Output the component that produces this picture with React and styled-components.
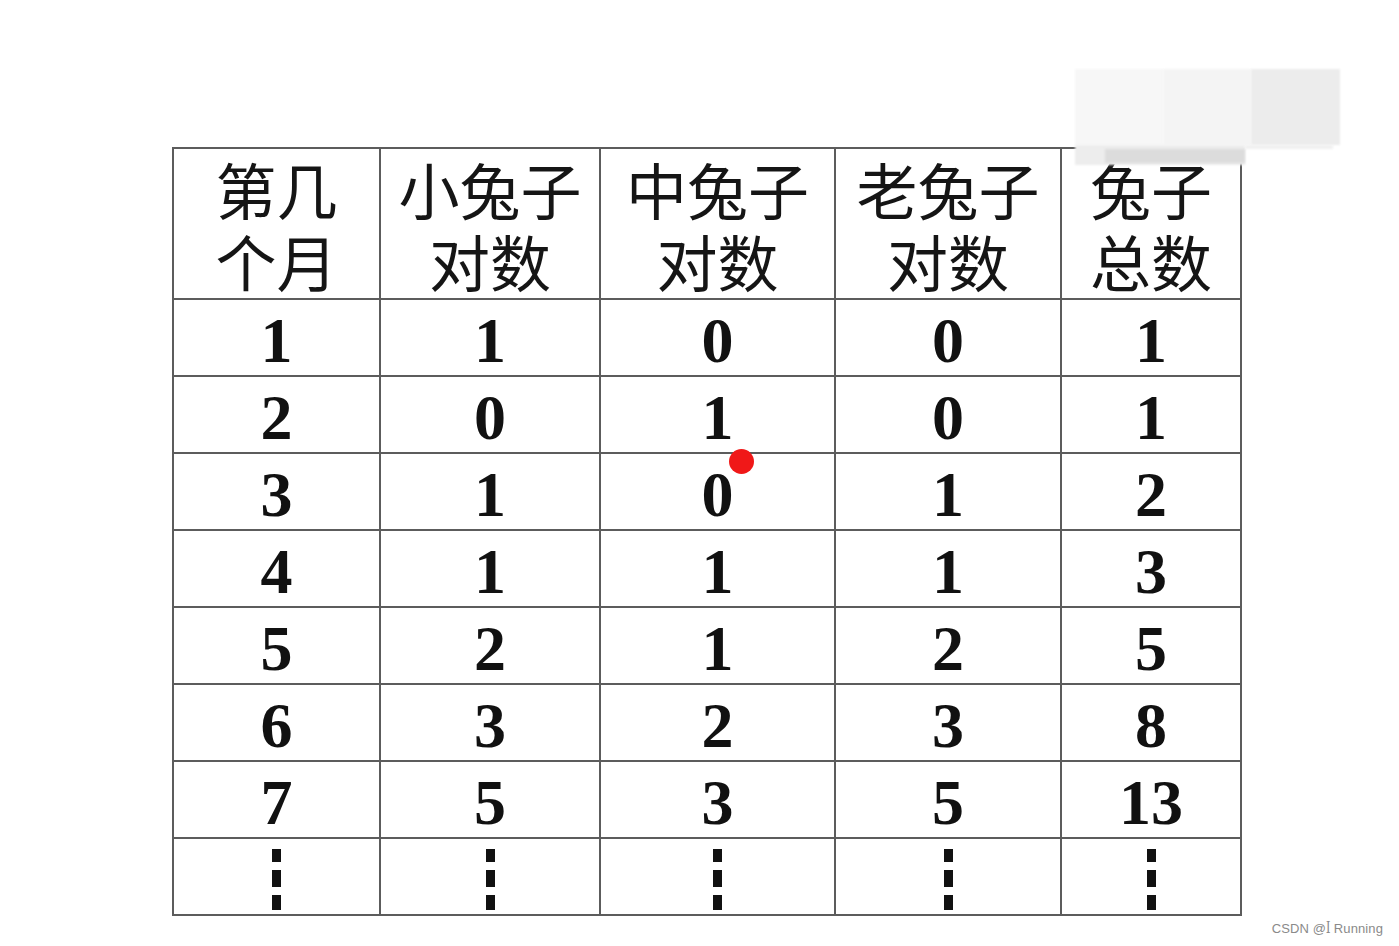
import React from "react";
import styled, { createGlobalStyle } from "styled-components";

const GlobalStyle = createGlobalStyle`
  html, body {
    margin: 0;
    padding: 0;
    background: #ffffff;
  }
  body {
    width: 1399px;
    height: 946px;
    overflow: hidden;
  }
`;

const Page = styled.div`
  position: relative;
  width: 1399px;
  height: 946px;
  box-sizing: border-box;
  padding: 147px 0 0 172px;
  background: #fff;
`;

const Table = styled.table`
  border-collapse: collapse;
  table-layout: fixed;
  border: 2px solid #6a6a6a;
`;

const Col = styled.col`
  width: ${(p) => p.$w}px;
`;

const HeadCell = styled.th`
  height: 147px;
  padding: 2px 0 0;
  border: 2px solid #5c5c5c;
  font-family: "Noto Sans CJK SC", "Noto Sans", sans-serif;
  font-weight: 400;
  font-size: 61px;
  color: #151515;
  text-align: center;
  vertical-align: middle;
`;

const HeadLine = styled.div`
  height: 72px;
  line-height: 72px;
  white-space: nowrap;
`;

const Cell = styled.td`
  height: 69px;
  padding: 6px 0 0;
  border: 2px solid #5c5c5c;
  font-family: "Liberation Serif", "Times New Roman", serif;
  font-weight: 700;
  font-size: 64px;
  line-height: 64px;
  color: #111;
  text-align: center;
  vertical-align: middle;
`;

const Dots = styled.div`
  display: flex;
  flex-direction: column;
  align-items: center;
  gap: 8px;
  margin: 0 auto;
  width: 9px;
`;

const Dash = styled.span`
  display: block;
  width: 9px;
  height: ${(p) => p.$h}px;
  background: #111;
`;

const RedDot = styled.div`
  position: absolute;
  left: 729px;
  top: 449px;
  width: 25px;
  height: 25px;
  border-radius: 50%;
  background: #f01818;
`;

const Smudge = styled.div`
  position: absolute;
  left: 1075px;
  top: 69px;
  width: 265px;
  height: 100px;
  pointer-events: none;
`;

const SmudgePart = styled.div`
  position: absolute;
  left: ${(p) => p.$x}px;
  top: ${(p) => p.$y}px;
  width: ${(p) => p.$w}px;
  height: ${(p) => p.$h}px;
  background: ${(p) => p.$c};
  filter: blur(1px);
`;

const Watermark = styled.div`
  position: absolute;
  right: 16px;
  bottom: 9px;
  font-family: "Liberation Sans", Arial, sans-serif;
  font-size: 13px;
  color: #8a8a8a;
  letter-spacing: 0.1px;
`;

const headers = [
  ["第几", "个月"],
  ["小兔子", "对数"],
  ["中兔子", "对数"],
  ["老兔子", "对数"],
  ["兔子", "总数"],
];

const rows = [
  [1, 1, 0, 0, 1],
  [2, 0, 1, 0, 1],
  [3, 1, 0, 1, 2],
  [4, 1, 1, 1, 3],
  [5, 2, 1, 2, 5],
  [6, 3, 2, 3, 8],
  [7, 5, 3, 5, 13],
];

const widths = [207, 220, 235, 226, 180];

function VDots() {
  return (
    <Dots>
      <Dash $h={13} />
      <Dash $h={17} />
      <Dash $h={15} />
    </Dots>
  );
}

export default function App() {
  return (
    <>
      <GlobalStyle />
      <Page>
        <Table>
          <colgroup>
            {widths.map((w, i) => (
              <Col key={i} $w={w} />
            ))}
          </colgroup>
          <thead>
            <tr>
              {headers.map((h, i) => (
                <HeadCell key={i}>
                  <HeadLine>{h[0]}</HeadLine>
                  <HeadLine>{h[1]}</HeadLine>
                </HeadCell>
              ))}
            </tr>
          </thead>
          <tbody>
            {rows.map((r, i) => (
              <tr key={i}>
                {r.map((v, j) => (
                  <Cell key={j}>{v}</Cell>
                ))}
              </tr>
            ))}
            <tr>
              {widths.map((_, j) => (
                <Cell key={j}>
                  <VDots />
                </Cell>
              ))}
            </tr>
          </tbody>
        </Table>
        <RedDot />
        <Smudge>
          <SmudgePart $x={0} $y={0} $w={88} $h={76} $c="#f7f7f7" />
          <SmudgePart $x={88} $y={0} $w={88} $h={76} $c="#f4f4f4" />
          <SmudgePart $x={176} $y={0} $w={89} $h={76} $c="#ececec" />
          <SmudgePart $x={0} $y={76} $w={170} $h={20} $c="#ededed" />
          <SmudgePart $x={170} $y={76} $w={88} $h={4} $c="#f0f0f0" />
          <SmudgePart $x={30} $y={80} $w={140} $h={14} $c="#dcdcdc" />
        </Smudge>
        <Watermark>CSDN @ꟾ Running</Watermark>
      </Page>
    </>
  );
}
